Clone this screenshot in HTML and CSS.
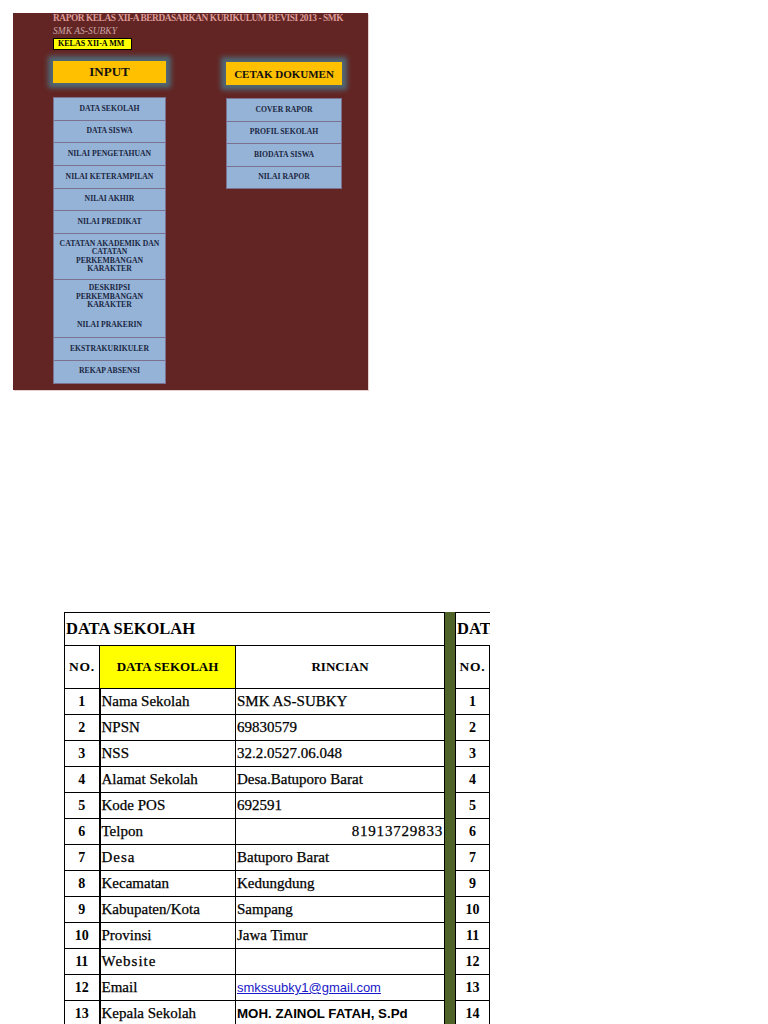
FILE: index.html
```html
<!DOCTYPE html>
<html lang="id">
<head>
<meta charset="utf-8">
<title>Rapor Kelas XII-A</title>
<link rel="stylesheet" href="styles.css">
</head>
<body>
<div class="dash">
  <div class="dash-title">RAPOR KELAS XII-A BERDASARKAN KURIKULUM REVISI 2013 - SMK</div>
  <div class="dash-sub">SMK AS-SUBKY</div>
  <div class="kelas">KELAS XII-A MM</div>
  <div class="cols">
    <div class="col col-left">
      <div class="btn btn-input">INPUT</div>
      <div class="menu">
        <div class="item">DATA SEKOLAH</div>
        <div class="item">DATA SISWA</div>
        <div class="item">NILAI PENGETAHUAN</div>
        <div class="item">NILAI KETERAMPILAN</div>
        <div class="item">NILAI AKHIR</div>
        <div class="item">NILAI PREDIKAT</div>
        <div class="item item-tall">CATATAN AKADEMIK DAN<br>CATATAN<br>PERKEMBANGAN<br>KARAKTER</div>
        <div class="item item-desk"><span>DESKRIPSI<br>PERKEMBANGAN<br>KARAKTER</span><span class="prakerin">NILAI PRAKERIN</span></div>
        <div class="item">EKSTRAKURIKULER</div>
        <div class="item">REKAP ABSENSI</div>
      </div>
    </div>
    <div class="col col-right">
      <div class="btn btn-cetak">CETAK DOKUMEN</div>
      <div class="menu menu-right">
        <div class="item">COVER RAPOR</div>
        <div class="item">PROFIL SEKOLAH</div>
        <div class="item">BIODATA SISWA</div>
        <div class="item">NILAI RAPOR</div>
      </div>
    </div>
  </div>
</div>

<div class="sheet">
  <table class="ds ds-main">
    <colgroup><col class="c-no"><col class="c-label"><col class="c-val"></colgroup>
    <tr class="r-title"><td colspan="3" class="title">DATA SEKOLAH</td></tr>
    <tr class="r-head"><th class="h-no">NO.</th><th class="yellow">DATA SEKOLAH</th><th>RINCIAN</th></tr>
    <tr><td class="n">1</td><td class="l">Nama Sekolah</td><td class="v">SMK AS-SUBKY</td></tr>
    <tr><td class="n">2</td><td class="l">NPSN</td><td class="v">69830579</td></tr>
    <tr><td class="n">3</td><td class="l">NSS</td><td class="v">32.2.0527.06.048</td></tr>
    <tr><td class="n">4</td><td class="l">Alamat Sekolah</td><td class="v">Desa.Batuporo Barat</td></tr>
    <tr><td class="n">5</td><td class="l">Kode POS</td><td class="v">692591</td></tr>
    <tr><td class="n">6</td><td class="l">Telpon</td><td class="v tel">81913729833</td></tr>
    <tr><td class="n">7</td><td class="l spaced">Desa</td><td class="v">Batuporo Barat</td></tr>
    <tr><td class="n">8</td><td class="l">Kecamatan</td><td class="v">Kedungdung</td></tr>
    <tr><td class="n">9</td><td class="l">Kabupaten/Kota</td><td class="v">Sampang</td></tr>
    <tr><td class="n">10</td><td class="l">Provinsi</td><td class="v">Jawa Timur</td></tr>
    <tr><td class="n">11</td><td class="l spaced">Website</td><td class="v"></td></tr>
    <tr><td class="n">12</td><td class="l">Email</td><td class="v"><a class="mail" href="#">smkssubky1@gmail.com</a></td></tr>
    <tr><td class="n">13</td><td class="l">Kepala Sekolah</td><td class="v kep">MOH. ZAINOL FATAH, S.Pd</td></tr>
  </table>
  <div class="bar"></div>
  <table class="ds ds-side">
    <colgroup><col class="c-no2"><col class="c-label"><col class="c-val"></colgroup>
    <tr class="r-title"><td colspan="3" class="title">DATA SEKOLAH</td></tr>
    <tr class="r-head"><th class="h-no">NO.</th><th></th><th></th></tr>
    <tr><td class="n">1</td><td></td><td></td></tr>
    <tr><td class="n">2</td><td></td><td></td></tr>
    <tr><td class="n">3</td><td></td><td></td></tr>
    <tr><td class="n">4</td><td></td><td></td></tr>
    <tr><td class="n">5</td><td></td><td></td></tr>
    <tr><td class="n">6</td><td></td><td></td></tr>
    <tr><td class="n">7</td><td></td><td></td></tr>
    <tr><td class="n">9</td><td></td><td></td></tr>
    <tr><td class="n">10</td><td></td><td></td></tr>
    <tr><td class="n">11</td><td></td><td></td></tr>
    <tr><td class="n">12</td><td></td><td></td></tr>
    <tr><td class="n">13</td><td></td><td></td></tr>
    <tr><td class="n">14</td><td></td><td></td></tr>
  </table>
</div>
</body>
</html>
```
FILE: styles.css
```css
html, body {
  margin: 0;
  padding: 0;
  background: #ffffff;
}
body {
  font-family: "Liberation Serif", serif;
  color: #000;
}

/* ---------- dashboard panel ---------- */
.dash {
  margin: 13px 0 0 13px;
  width: 355px;
  height: 377px;
  box-sizing: border-box;
  padding-left: 40px;
  background: #632523;
  box-shadow: 1px 1px 0 #e6cfcf;
  overflow: hidden;
}
.dash-title {
  font-weight: bold;
  font-size: 9.4px;
  line-height: 10px;
  letter-spacing: -0.45px;
  color: #dc9a98;
  white-space: nowrap;
}
.dash-sub {
  margin-top: 3px;
  font-style: italic;
  font-size: 9.5px;
  line-height: 11px;
  color: #c8a2a5;
}
.kelas {
  box-sizing: border-box;
  width: 79px;
  height: 12px;
  margin-top: 1px;
  padding-left: 4px;
  background: #ffff00;
  border: 1px solid #000;
  font-weight: bold;
  font-size: 8px;
  line-height: 10px;
  color: #000;
  white-space: nowrap;
}
.cols {
  display: flex;
  gap: 60px;
  margin-top: 11px;
}
.col-left { width: 113px; }
.col-right { width: 116px; }

.btn {
  display: flex;
  align-items: center;
  justify-content: center;
  background: #ffc000;
  color: #111;
  font-weight: bold;
  box-shadow: 0 0 5px 5px rgba(78, 112, 128, 0.9);
}
.btn-input {
  height: 22px;
  font-size: 13px;
}
.btn-cetak {
  height: 23px;
  margin-top: 1px;
  font-size: 11px;
}

.menu {
  margin-top: 14px;
  background: #95b3d7;
  border: 1px solid #7c7290;
  border-bottom: none;
}
.menu-right { margin-top: 13px; }
.item {
  box-sizing: border-box;
  height: 22.7px;
  display: flex;
  align-items: center;
  justify-content: center;
  text-align: center;
  border-bottom: 1px solid #7c7290;
  font-weight: bold;
  font-size: 7.7px;
  line-height: 8.4px;
  color: #1b2742;
}
.menu-right .item { height: 22.5px; }
.item-tall { height: 46px; }
.item-desk {
  height: 58px;
  flex-direction: column;
  justify-content: flex-start;
  padding-top: 4px;
}
.prakerin { margin-top: 12px; }

/* ---------- data sheet ---------- */
.sheet {
  display: flex;
  align-items: stretch;
  width: 426px;
  height: 412px;
  margin: 222px 0 0 64px;
  overflow: hidden;
}
.ds {
  flex-shrink: 0;
  border-collapse: collapse;
  table-layout: fixed;
  font-family: "Liberation Serif", serif;
  color: #000;
}
.ds-main { width: 381px; }
.ds-side { width: 380px; }
.c-no { width: 35px; }
.c-no2 { width: 34px; }
.c-label { width: 136px; }
.c-val { width: 209px; }

.ds td, .ds th {
  border: 1px solid #000;
  padding: 0 1px;
  white-space: nowrap;
  overflow: hidden;
  vertical-align: middle;
}
.ds tr { height: 26px; }
.ds tr.r-title { height: 33px; }
.ds tr.r-head { height: 43px; }

.title {
  font-weight: bold;
  font-size: 16.5px;
  text-align: left;
  padding-left: 1px;
}
.r-head th {
  font-weight: bold;
  font-size: 13px;
  text-align: center;
}
.r-head .h-no {
  font-size: 13.5px;
  letter-spacing: 0.8px;
}
.yellow { background: #ffff00; }

.n {
  text-align: center;
  font-weight: bold;
  font-size: 14px;
}
.l, .v {
  font-size: 15px;
  -webkit-text-stroke: 0.25px #000;
}
.ds .l { border-left-width: 2px; }
.spaced { letter-spacing: 1px; }
.tel {
  text-align: right;
  letter-spacing: 0.8px;
}
.mail {
  font-family: "Liberation Sans", sans-serif;
  font-size: 13px;
  color: #1a1ac8;
  text-decoration: underline;
  -webkit-text-stroke: 0;
}
.kep {
  font-family: "Liberation Sans", sans-serif;
  font-weight: bold;
  font-size: 13.3px;
  -webkit-text-stroke: 0;
}

.bar {
  flex-shrink: 0;
  width: 10px;
  background: #4f6228;
}
```
